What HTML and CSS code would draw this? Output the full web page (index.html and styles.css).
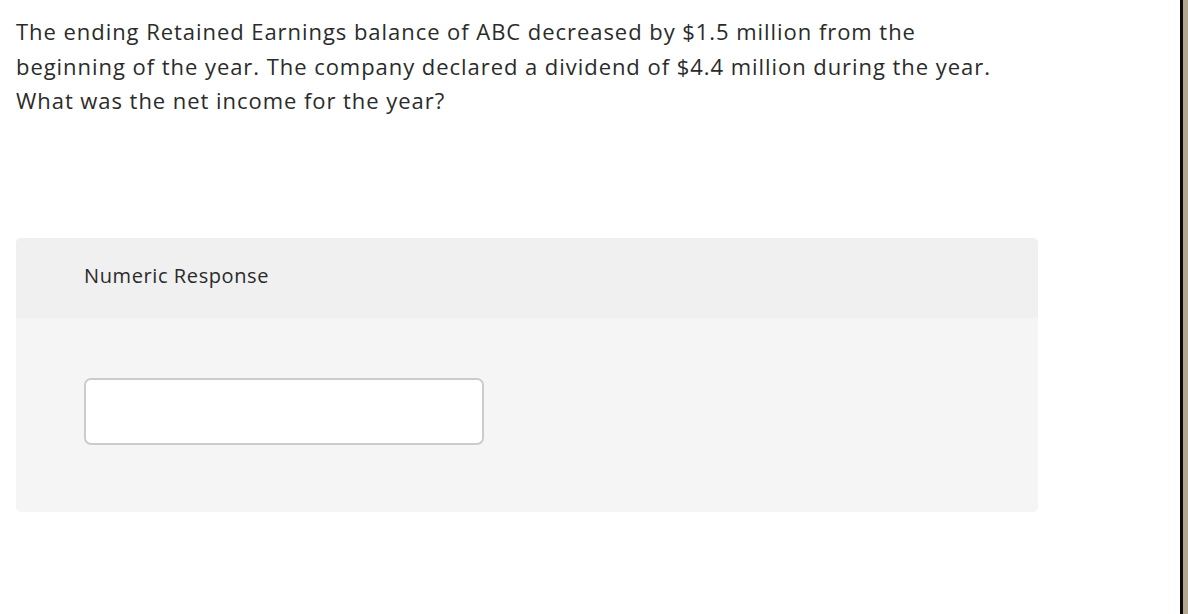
FILE: index.html
```html
<!DOCTYPE html>
<html lang="en">
<head>
<meta charset="utf-8">
<title>Question</title>
<link rel="stylesheet" href="styles.css">
</head>
<body>
<div class="page">
  <main class="content">
    <p class="question">The ending Retained Earnings balance of ABC decreased by $1.5 million from the beginning of the year. The company declared a dividend of $4.4 million during the year. What was the net income for the year?</p>
    <section class="response">
      <div class="response-head">Numeric Response</div>
      <div class="response-body">
        <input class="answer" type="text" aria-label="Numeric Response">
      </div>
    </section>
  </main>
  <div class="edge"></div>
</div>
</body>
</html>
```

FILE: styles.css
```css
html, body {
  margin: 0;
  padding: 0;
  background: #ffffff;
  height: 100%;
}
.page {
  display: flex;
  height: 614px;
  overflow: hidden;
}
.content {
  flex: 1;
  padding: 0 142px 0 16px;
  font-family: "Open Sans", "Liberation Sans", sans-serif;
  color: #2b2b2b;
}
.edge {
  width: 5px;
  border-left: 3px solid #0a0a0a;
  background: #b3a791;
}
.question {
  margin: 14px 0 0 0;
  font-size: 22px;
  letter-spacing: 0.95px;
  line-height: 34.5px;
  width: 1000px;
}
.response {
  margin-top: 120px;
  border-radius: 5px;
  overflow: hidden;
  background: #f5f5f5;
}
.response-head {
  background: #f0f0f0;
  height: 80px;
  box-sizing: border-box;
  padding: 25px 0 0 68px;
  font-size: 20px;
  letter-spacing: 0.6px;
  line-height: 26px;
}
.response-body {
  padding: 60px 68px 67px;
}
.answer {
  display: block;
  width: 400px;
  height: 67px;
  box-sizing: border-box;
  border: 2px solid #cccccc;
  border-radius: 7px;
  background: #ffffff;
  margin: 0;
  font: inherit;
  outline: none;
}
```
